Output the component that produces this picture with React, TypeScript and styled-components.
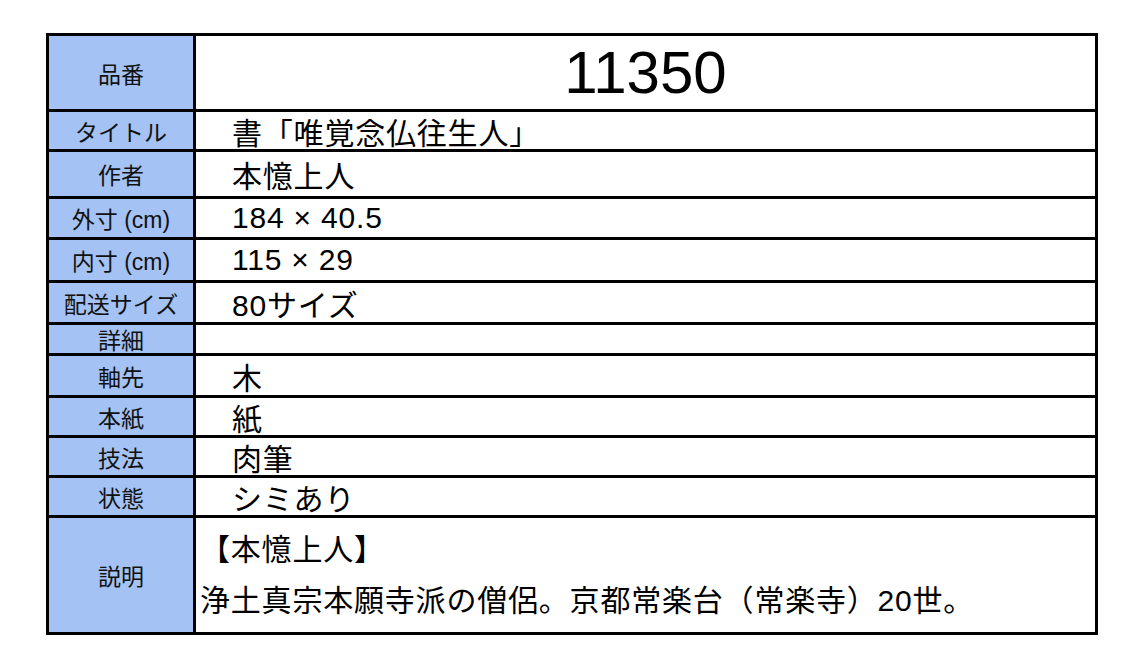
import React from "react";
import styled, { createGlobalStyle } from "styled-components";

const GlobalStyle = createGlobalStyle`
  html, body {
    margin: 0;
    padding: 0;
    background: #ffffff;
  }
  body {
    font-family: "Liberation Sans", "Noto Sans CJK JP", sans-serif;
    color: #000;
  }
`;

const Page = styled.div`
  padding: 33px 0 0 46px;
  width: 1142px;
  height: 671px;
  box-sizing: border-box;
`;

const Sheet = styled.div`
  display: grid;
  grid-template-columns: 144px 899px;
  gap: 3px;
  padding: 3px;
  width: fit-content;
  background: #000;
`;

const Label = styled.div<{ $h: number }>`
  height: ${(p) => p.$h}px;
  background: #a4c2f4;
  display: flex;
  align-items: center;
  justify-content: center;
  font-size: 23px;
  color: #111;
  white-space: nowrap;
`;

const Value = styled.div<{ $h: number }>`
  height: ${(p) => p.$h}px;
  background: #fff;
  display: flex;
  align-items: center;
  padding-left: 36px;
  font-size: 30px;
  letter-spacing: 0.8px;
  white-space: nowrap;
`;

const Number = styled(Value)`
  justify-content: center;
  padding-left: 0;
  font-size: 60px;
  letter-spacing: 0;
`;

const Note = styled(Value)`
  flex-direction: column;
  align-items: flex-start;
  justify-content: center;
  padding-left: 4px;
  line-height: 51px;
`;

const rows: { label: string; value: string; h: number }[] = [
  { label: "タイトル", value: "書「唯覚念仏往生人」", h: 37 },
  { label: "作者", value: "本憶上人", h: 44 },
  { label: "外寸 (cm)", value: "184 × 40.5", h: 38 },
  { label: "内寸 (cm)", value: "115 × 29", h: 40 },
  { label: "配送サイズ", value: "80サイズ", h: 39 },
  { label: "詳細", value: "", h: 28 },
  { label: "軸先", value: "木", h: 39 },
  { label: "本紙", value: "紙", h: 37 },
  { label: "技法", value: "肉筆", h: 37 },
  { label: "状態", value: "シミあり", h: 37 },
];

export default function App() {
  return (
    <>
      <GlobalStyle />
      <Page>
        <Sheet>
          <Label $h={73}>品番</Label>
          <Number $h={73}>11350</Number>
          {rows.map((r) => (
            <React.Fragment key={r.label}>
              <Label $h={r.h}>{r.label}</Label>
              <Value $h={r.h}>{r.value}</Value>
            </React.Fragment>
          ))}
          <Label $h={114}>説明</Label>
          <Note $h={114}>
            <div>【本憶上人】</div>
            <div>浄土真宗本願寺派の僧侶。京都常楽台（常楽寺）20世。</div>
          </Note>
        </Sheet>
      </Page>
    </>
  );
}
